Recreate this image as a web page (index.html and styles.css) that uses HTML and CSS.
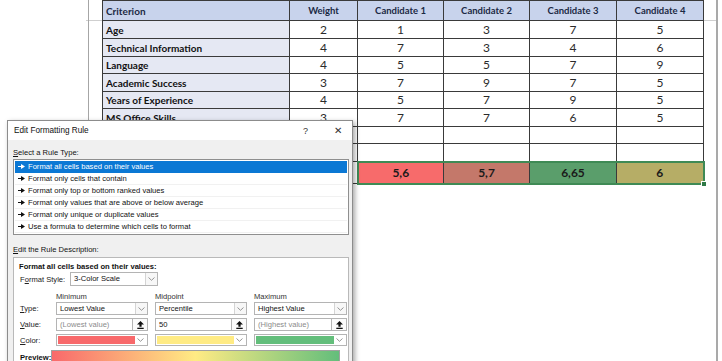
FILE: index.html
```html
<!DOCTYPE html>
<html>
<head>
    <meta name="viewport" content="width=device-width, initial-scale=1" charset="utf-8">
    <title>Edit Formatting Rule</title>
    <link rel="stylesheet" href="styles.css">
</head>
<body>
<div class="page">
    <div class="gutter"></div>
    <div class="doc">
        <table class="grid">
            <colgroup>
                <col class="c-crit">
                <col class="c-weight">
                <col class="c-cand">
                <col class="c-cand">
                <col class="c-cand2">
                <col class="c-cand2">
            </colgroup>
            <tr class="head">
                <th class="crit">Criterion</th>
                <th>Weight</th>
                <th>Candidate 1</th>
                <th>Candidate 2</th>
                <th>Candidate 3</th>
                <th>Candidate 4</th>
            </tr>
            <tr class="r18"><td class="crit">Age</td><td>2</td><td>1</td><td>3</td><td>7</td><td>5</td></tr>
            <tr class="r18"><td class="crit">Technical Information</td><td>4</td><td>7</td><td>3</td><td>4</td><td>6</td></tr>
            <tr class="r17"><td class="crit">Language</td><td>4</td><td>5</td><td>5</td><td>7</td><td>9</td></tr>
            <tr class="r18"><td class="crit">Academic Success</td><td>3</td><td>7</td><td>9</td><td>7</td><td>5</td></tr>
            <tr class="r17"><td class="crit">Years of Experience</td><td>4</td><td>5</td><td>7</td><td>9</td><td>5</td></tr>
            <tr class="r18"><td class="crit">MS Office Skills</td><td>3</td><td>7</td><td>7</td><td>6</td><td>5</td></tr>
            <tr class="r17"><td class="crit"></td><td></td><td></td><td></td><td></td><td></td></tr>
            <tr class="r18"><td class="crit"></td><td></td><td></td><td></td><td></td><td></td></tr>
            <tr class="result">
                <td class="crit"></td>
                <td></td>
                <td class="sel first red">5,6</td>
                <td class="sel brown">5,7</td>
                <td class="sel green">6,65</td>
                <td class="sel last olive">6</td>
            </tr>
        </table>
    </div>
    <div class="gutter-right"></div>
</div>

<div class="dialog">
    <div class="titlebar">
        <span class="title">Edit Formatting Rule</span>
        <span class="help">?</span>
        <span class="close">✕</span>
    </div>
    <div class="dialog-body">
        <div class="label"><u>S</u>elect a Rule Type:</div>
        <div class="rule-list">
            <div class="rule active"><svg class="mark" width="7" height="5" viewBox="0 0 7 5"><rect x="0" y="2" width="4" height="1" fill="currentColor"/><path d="M3 0 L7 2.5 L3 5 Z" fill="currentColor"/></svg>Format all cells based on their values</div>
            <div class="rule"><svg class="mark" width="7" height="5" viewBox="0 0 7 5"><rect x="0" y="2" width="4" height="1" fill="currentColor"/><path d="M3 0 L7 2.5 L3 5 Z" fill="currentColor"/></svg>Format only cells that contain</div>
            <div class="rule"><svg class="mark" width="7" height="5" viewBox="0 0 7 5"><rect x="0" y="2" width="4" height="1" fill="currentColor"/><path d="M3 0 L7 2.5 L3 5 Z" fill="currentColor"/></svg>Format only top or bottom ranked values</div>
            <div class="rule"><svg class="mark" width="7" height="5" viewBox="0 0 7 5"><rect x="0" y="2" width="4" height="1" fill="currentColor"/><path d="M3 0 L7 2.5 L3 5 Z" fill="currentColor"/></svg>Format only values that are above or below average</div>
            <div class="rule"><svg class="mark" width="7" height="5" viewBox="0 0 7 5"><rect x="0" y="2" width="4" height="1" fill="currentColor"/><path d="M3 0 L7 2.5 L3 5 Z" fill="currentColor"/></svg>Format only unique or duplicate values</div>
            <div class="rule"><svg class="mark" width="7" height="5" viewBox="0 0 7 5"><rect x="0" y="2" width="4" height="1" fill="currentColor"/><path d="M3 0 L7 2.5 L3 5 Z" fill="currentColor"/></svg>Use a formula to determine which cells to format</div>
        </div>
        <div class="label label-desc"><u>E</u>dit the Rule Description:</div>
        <div class="desc">
            <div class="desc-title">Format all cells based on their values:</div>
            <div class="style-row">
                <span class="row-label">F<u>o</u>rmat Style:</span>
                <div class="select style-select">
                    <span class="select-text">3-Color Scale</span>
                    <span class="arrow"><svg width="7" height="4" viewBox="0 0 7 4"><path d="M0.5 0.5 L3.5 3.3 L6.5 0.5" fill="none" stroke="#8a8a8a" stroke-width="0.9"/></svg></span>
                </div>
            </div>
            <div class="scale">
                <span></span>
                <span class="col-head">Minimum</span>
                <span class="col-head">Midpoint</span>
                <span class="col-head">Maximum</span>

                <span class="row-label"><u>T</u>ype:</span>
                <div class="select">
                    <span class="select-text">Lowest Value</span>
                    <span class="arrow"><svg width="7" height="4" viewBox="0 0 7 4"><path d="M0.5 0.5 L3.5 3.3 L6.5 0.5" fill="none" stroke="#8a8a8a" stroke-width="0.9"/></svg></span>
                </div>
                <div class="select">
                    <span class="select-text">Percentile</span>
                    <span class="arrow"><svg width="7" height="4" viewBox="0 0 7 4"><path d="M0.5 0.5 L3.5 3.3 L6.5 0.5" fill="none" stroke="#8a8a8a" stroke-width="0.9"/></svg></span>
                </div>
                <div class="select">
                    <span class="select-text">Highest Value</span>
                    <span class="arrow"><svg width="7" height="4" viewBox="0 0 7 4"><path d="M0.5 0.5 L3.5 3.3 L6.5 0.5" fill="none" stroke="#8a8a8a" stroke-width="0.9"/></svg></span>
                </div>

                <span class="row-label"><u>V</u>alue:</span>
                <div class="input">
                    <span class="input-text muted">(Lowest value)</span>
                    <span class="pick"><svg width="7" height="8" viewBox="0 0 7 8"><path d="M3.5 0 L7 3.6 H4.6 V5.8 H2.4 V3.6 H0 Z" fill="#111"/><rect x="0.3" y="6.7" width="6.4" height="1.3" fill="#111"/></svg></span>
                </div>
                <div class="input">
                    <span class="input-text">50</span>
                    <span class="pick"><svg width="7" height="8" viewBox="0 0 7 8"><path d="M3.5 0 L7 3.6 H4.6 V5.8 H2.4 V3.6 H0 Z" fill="#111"/><rect x="0.3" y="6.7" width="6.4" height="1.3" fill="#111"/></svg></span>
                </div>
                <div class="input">
                    <span class="input-text muted">(Highest value)</span>
                    <span class="pick"><svg width="7" height="8" viewBox="0 0 7 8"><path d="M3.5 0 L7 3.6 H4.6 V5.8 H2.4 V3.6 H0 Z" fill="#111"/><rect x="0.3" y="6.7" width="6.4" height="1.3" fill="#111"/></svg></span>
                </div>

                <span class="row-label"><u>C</u>olor:</span>
                <div class="select color">
                    <span class="swatch sw-red"></span>
                    <span class="arrow"><svg width="7" height="4" viewBox="0 0 7 4"><path d="M0.5 0.5 L3.5 3.3 L6.5 0.5" fill="none" stroke="#8a8a8a" stroke-width="0.9"/></svg></span>
                </div>
                <div class="select color">
                    <span class="swatch sw-yellow"></span>
                    <span class="arrow"><svg width="7" height="4" viewBox="0 0 7 4"><path d="M0.5 0.5 L3.5 3.3 L6.5 0.5" fill="none" stroke="#8a8a8a" stroke-width="0.9"/></svg></span>
                </div>
                <div class="select color">
                    <span class="swatch sw-green"></span>
                    <span class="arrow"><svg width="7" height="4" viewBox="0 0 7 4"><path d="M0.5 0.5 L3.5 3.3 L6.5 0.5" fill="none" stroke="#8a8a8a" stroke-width="0.9"/></svg></span>
                </div>
            </div>
            <div class="preview-row">
                <span class="preview-label">Preview:</span>
                <div class="preview-bar"></div>
            </div>
        </div>
    </div>
</div>
</body>
</html>
```

FILE: styles.css
```css
body {
    margin: 0;
    background-color: white;
    font-family: Lato, "Liberation Sans", sans-serif;
    overflow: hidden;
    height: 361px;
}

.page {
    display: flex;
    height: 361px;
}

.gutter {
    width: 88px;
    border-right: 1px solid #a6a6a6;
    background: linear-gradient(#cfcfcf, #cfcfcf) right 20px / 2px 1px no-repeat;
}

.doc {
    width: 627px;
    padding-left: 13px;
    box-sizing: border-box;
    background: linear-gradient(#cfcfcf, #cfcfcf) 0 20px / 13px 1px no-repeat,
                linear-gradient(#cfcfcf, #cfcfcf) right 20px / 13px 1px no-repeat;
}

.gutter-right {
    flex: 1;
    border-left: 2px solid #a9a9a9;
}

/* table */
.grid {
    border-collapse: collapse;
    table-layout: fixed;
    width: 601px;
    color: #2b2b2b;
}
.c-crit { width: 187px; }
.c-weight { width: 68px; }
.c-cand { width: 86px; }
.c-cand2 { width: 87px; }

.grid th, .grid td {
    border: 1px solid #3a3a3a;
    padding: 0 3px;
    text-align: center;
    font-size: 12px;
    line-height: 14px;
    white-space: nowrap;
    overflow: hidden;
}
.grid th {
    background-color: #c8d3ec;
    color: #1b2944;
    font-size: 9.5px;
    font-weight: bold;
}
.grid .crit {
    text-align: left;
    background-color: #e5e8f3;
    font-size: 10px;
    font-weight: bold;
    color: #111;
}
.grid th.crit {
    background-color: #c8d3ec;
    color: #1b2944;
}
.head { height: 20px; }
.r18 { height: 18px; }
.r17 { height: 17px; }
.result { height: 22px; }

.grid td.sel {
    font-weight: bold;
    font-size: 12px;
    color: #1a1a1a;
    border-top: 2px solid #3f8a55;
    border-bottom: 2px solid #3f8a55;
}
.grid td.first { border-left: 2px solid #3f8a55; }
.grid td.last {
    border-right: 2px solid #3f8a55;
    position: relative;
    overflow: visible;
}
.grid td.last::after {
    content: "";
    position: absolute;
    right: -4px;
    bottom: -4px;
    width: 4px;
    height: 4px;
    background-color: #2f7a47;
    border: 1px solid white;
}
.red { background-color: #f76b6b; }
.brown { background-color: #c4786a; }
.green { background-color: #5a9e6b; }
.olive { background-color: #b6ad66; }

/* dialog */
.dialog {
    position: absolute;
    left: 7px;
    top: 120px;
    width: 346px;
    height: 260px;
    box-sizing: border-box;
    border: 1px solid #8c8c8c;
    background-color: #f0f0f0;
    box-shadow: 2px 2px 5px rgba(0, 0, 0, 0.35);
    font-family: "Liberation Sans", Arial, sans-serif;
    color: #111;
}

.titlebar {
    display: flex;
    align-items: center;
    height: 19px;
    background-color: white;
    padding-left: 6px;
    font-size: 8.2px;
}
.title { flex: 1; }
.help {
    width: 31px;
    font-size: 9px;
    color: #333;
}
.close {
    width: 18px;
    font-size: 10px;
    color: #333;
}

.dialog-body {
    padding: 8px 3px 0 5px;
}

.label {
    font-size: 7.6px;
    line-height: 10px;
    margin-bottom: 1px;
}
.label-desc {
    margin-top: 10px;
    margin-bottom: 2px;
}

.rule-list {
    background-color: white;
    border: 1px solid #8f8f8f;
    padding: 1px;
    box-sizing: border-box;
    height: 76px;
}
.rule {
    height: 12px;
    line-height: 12px;
    font-size: 7.6px;
    padding-left: 3px;
    color: #111;
    border-bottom: 1px solid #f1f1f1;
    box-sizing: border-box;
}
.rule.active {
    background-color: #0b78d4;
    color: white;
    border-bottom-color: #0b78d4;
}
.mark {
    margin-right: 3px;
    vertical-align: 0;
}

.desc {
    background-color: white;
    border: 1px solid #b9b9b9;
    height: 120px;
    padding: 4px 8px 0 5px;
    box-sizing: border-box;
}
.desc-title {
    font-size: 7.6px;
    font-weight: bold;
    line-height: 10px;
}

.style-row {
    display: flex;
    align-items: center;
    padding-left: 1px;
}
.style-row .row-label {
    width: 50px;
}
.row-label {
    font-size: 7.6px;
    color: #222;
}

.select, .input {
    display: flex;
    align-items: stretch;
    height: 13px;
    box-sizing: border-box;
    border: 1px solid #b4b4b4;
    background-color: white;
}
.style-select {
    width: 88px;
    height: 14px;
}
.select-text, .input-text {
    flex: 1;
    font-size: 7.6px;
    line-height: 11px;
    padding-left: 3px;
    overflow: hidden;
    white-space: nowrap;
}
.muted { color: #8b8b8b; }
.arrow {
    width: 11px;
    border-left: 1px solid #d4d4d4;
    background-color: #f7f7f7;
    display: flex;
    align-items: center;
    justify-content: center;
}
.pick {
    width: 14px;
    border-left: 1px solid #b4b4b4;
    background-color: #fbfbfb;
    display: flex;
    align-items: center;
    justify-content: center;
}

.scale {
    display: grid;
    grid-template-columns: 29px 92px 92px 93px;
    column-gap: 7px;
    row-gap: 3px;
    margin-top: 7px;
    padding-left: 1px;
    align-items: center;
}
.col-head {
    font-size: 7.6px;
    line-height: 8px;
    margin-bottom: -2px;
    color: #333;
}
.select.color {
    height: 12px;
    padding: 1px;
}
.swatch { flex: 1; }
.sw-red { background-color: #f8696b; }
.sw-yellow { background-color: #ffeb84; }
.sw-green { background-color: #63be7b; }
.select.color .arrow {
    border-left: none;
    background-color: white;
}

.preview-row {
    display: flex;
    margin-top: 4px;
    padding-left: 1px;
}
.preview-label {
    width: 31px;
    font-size: 7.6px;
    font-weight: bold;
    padding-top: 3px;
}
.preview-bar {
    width: 290px;
    height: 20px;
    border: 1px solid #a0a0a0;
    background: linear-gradient(to right, #f8696b, #ffeb84 50%, #63be7b);
}
```
